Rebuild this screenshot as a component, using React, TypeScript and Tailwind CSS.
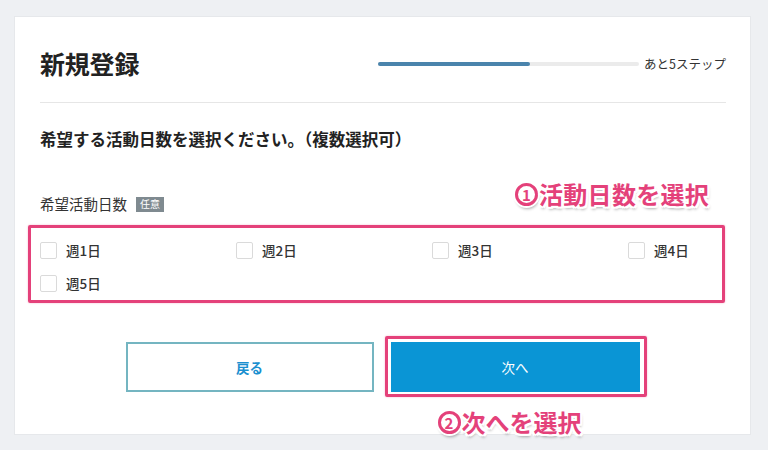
import { useState } from 'react';

const days = ['週1日', '週2日', '週3日', '週4日', '週5日'];

const outline =
    '[text-shadow:-2px_-2px_0_#fff,2px_-2px_0_#fff,-2px_2px_0_#fff,2px_2px_0_#fff,0_2px_0_#fff,0_-2px_0_#fff,2px_0_0_#fff,-2px_0_0_#fff,1px_3px_3px_rgba(0,0,0,0.35)]';

function Circled({ n }: { n: number }) {
    return (
        <span className="mr-[1px] inline-flex h-[23px] w-[23px] items-center justify-center rounded-full border-[3px] border-[#e4417a] text-[15px] leading-none font-bold shadow-[0_0_0_2px_#fff,inset_0_0_0_1px_#fff,1px_3px_3px_rgba(0,0,0,0.3)] [text-shadow:none]">
            {n}
        </span>
    );
}

export default function App() {
    const [checked, setChecked] = useState<string[]>([]);

    const toggle = (d: string) =>
        setChecked((prev) => (prev.includes(d) ? prev.filter((x) => x !== d) : [...prev, d]));

    return (
        <div className="h-[450px] w-[768px] overflow-hidden bg-[#eef0f3] pt-[17px] pl-[15px] font-['Noto_Sans_CJK_JP','Noto_Sans',sans-serif] text-[#222]">
            <div className="h-[417px] w-[735px] bg-white pl-[25px] pr-[24px] shadow-[0_0_0_1px_#e6e8eb]">
                {/* Header */}
                <div className="flex items-center border-b border-[#e6e6e6] pt-[30px] pb-[22px]">
                    <h1 className="text-[25px] leading-[33px] font-bold tracking-[-0.2px]">新規登録</h1>
                    <div className="ml-auto flex items-center">
                        <div className="h-[4px] w-[261px] rounded-full bg-[#ebebeb]">
                            <div className="h-full w-[152px] rounded-full bg-[#4a84ac]" />
                        </div>
                        <span className="ml-[5px] text-[12.5px] leading-[16px] text-[#333]">あと5ステップ</span>
                    </div>
                </div>

                {/* Question */}
                <p className="mt-[26px] text-[16.5px] leading-[20px] font-bold text-[#222]">
                    希望する活動日数を選択ください。（複数選択可）
                </p>

                {/* Field label */}
                <div className="mt-[45px] flex items-center">
                    <span className="text-[14.5px] leading-[20px] text-[#333]">希望活動日数</span>
                    <span className="ml-[9px] flex h-[15px] w-[28px] items-center justify-center bg-[#7f8a90] text-[10px] leading-none text-white">
                        任意
                    </span>
                </div>

                {/* Options */}
                <div className="relative mt-[26px]">
                    <div className="grid grid-cols-[repeat(4,196px)] gap-y-[13px]">
                        {days.map((d) => (
                            <label key={d} className="flex h-[20px] cursor-pointer items-center">
                                <input
                                    type="checkbox"
                                    checked={checked.includes(d)}
                                    onChange={() => toggle(d)}
                                    className="h-[17px] w-[17px] appearance-none rounded-[2px] border border-[#dadada] bg-white checked:bg-[#0a95d5]"
                                />
                                <span className="ml-[9px] text-[13.5px] leading-[20px] font-medium text-[#333]">{d}</span>
                            </label>
                        ))}
                    </div>
                    <div className="pointer-events-none absolute top-[-15px] right-[1px] bottom-[-10px] left-[-12px] rounded-[2px] border-[3px] border-[#e4417a] shadow-[0_0_2px_rgba(228,65,122,0.4)]" />
                    <span className={`pointer-events-none absolute top-[-60px] left-[475px] flex items-center text-[24px] leading-[28px] font-bold tracking-[0.3px] whitespace-nowrap text-[#e4417a] ${outline}`}>
                        <Circled n={1} />
                        活動日数を選択
                    </span>
                </div>

                {/* Buttons */}
                <div className="mt-[49px] flex justify-center gap-[17px] pr-[1px]">
                    <button
                        type="button"
                        className="h-[50px] w-[248px] border-2 border-[#74b5c1] bg-white text-[13.5px] font-bold text-[#1b8fcf]"
                    >
                        戻る
                    </button>
                    <div className="relative">
                        <button type="button" className="h-[50px] w-[249px] bg-[#0a95d5] text-[13.5px] text-white">
                            次へ
                        </button>
                        <div className="pointer-events-none absolute top-[-6px] right-[-7px] bottom-[-5px] left-[-6px] rounded-[2px] border-[3px] border-[#e4417a] shadow-[0_0_2px_rgba(228,65,122,0.4)]" />
                        <span className={`pointer-events-none absolute top-[66px] left-[47px] flex items-center text-[24px] leading-[28px] font-bold whitespace-nowrap text-[#e4417a] ${outline}`}>
                            <Circled n={2} />
                            次へを選択
                        </span>
                    </div>
                </div>
            </div>
        </div>
    );
}
